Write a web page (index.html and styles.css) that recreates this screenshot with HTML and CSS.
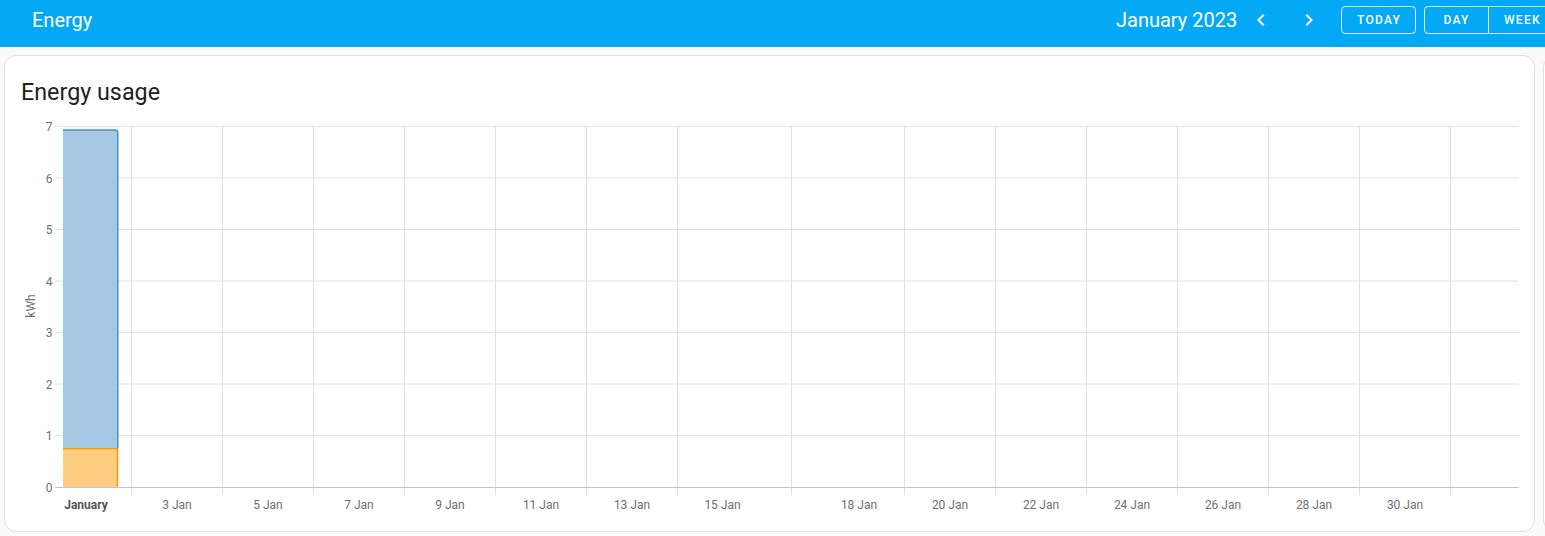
FILE: index.html
```html
<!DOCTYPE html>
<html lang="en">
<head>
    <meta charset="UTF-8">
    <meta name="viewport" content="width=device-width, initial-scale=1.0">
    <title>Energy</title>
    <link rel="stylesheet" href="styles.css">
</head>
<body>
    <div class="header">
        <div class="title">Energy</div>
        <div class="nav">
            <span class="period">January 2023</span>
            <button class="icon-btn" aria-label="Previous">
                <svg viewBox="0 0 24 24" width="24" height="24"><path d="M15.41,16.58L10.83,12L15.41,7.41L14,6L8,12L14,18L15.41,16.58Z" fill="#fff"/></svg>
            </button>
            <button class="icon-btn" aria-label="Next">
                <svg viewBox="0 0 24 24" width="24" height="24"><path d="M8.59,16.58L13.17,12L8.59,7.41L10,6L16,12L10,18L8.59,16.58Z" fill="#fff"/></svg>
            </button>
            <button class="btn today">Today</button>
            <div class="btn-group">
                <button class="btn">Day</button>
                <button class="btn">Week</button>
            </div>
        </div>
    </div>
    <div class="cards">
        <div class="card">
            <h1>Energy usage</h1>
            <svg class="chart" width="1529" height="423" viewBox="0 0 1529 423">
                <g stroke="#e0e0e0" stroke-width="1">
                    <line x1="50" x2="1514" y1="18.5" y2="18.5"/>
                    <line x1="50" x2="1514" y1="70" y2="70"/>
                    <line x1="50" x2="1514" y1="121.5" y2="121.5"/>
                    <line x1="50" x2="1514" y1="173" y2="173"/>
                    <line x1="50" x2="1514" y1="224.5" y2="224.5"/>
                    <line x1="50" x2="1514" y1="276" y2="276"/>
                    <line x1="50" x2="1514" y1="327.5" y2="327.5"/>
                </g>
                <g stroke="#e0e0e0" stroke-width="1">
                    <line x1="126.5" x2="126.5" y1="18" y2="387"/>
                    <line x1="217.5" x2="217.5" y1="18" y2="387"/>
                    <line x1="308.5" x2="308.5" y1="18" y2="387"/>
                    <line x1="399.5" x2="399.5" y1="18" y2="387"/>
                    <line x1="490.5" x2="490.5" y1="18" y2="387"/>
                    <line x1="581.5" x2="581.5" y1="18" y2="387"/>
                    <line x1="672.5" x2="672.5" y1="18" y2="387"/>
                    <line x1="786.5" x2="786.5" y1="18" y2="387"/>
                    <line x1="899.5" x2="899.5" y1="18" y2="387"/>
                    <line x1="990.5" x2="990.5" y1="18" y2="387"/>
                    <line x1="1081.5" x2="1081.5" y1="18" y2="387"/>
                    <line x1="1172.5" x2="1172.5" y1="18" y2="387"/>
                    <line x1="1263.5" x2="1263.5" y1="18" y2="387"/>
                    <line x1="1354.5" x2="1354.5" y1="18" y2="387"/>
                    <line x1="1445.5" x2="1445.5" y1="18" y2="387"/>
                </g>
                <line x1="50" x2="1514" y1="379.5" y2="379.5" stroke="#c4c4c4" stroke-width="1"/>

                <!-- stacked bar: solar + grid -->
                <rect x="58" y="340" width="55" height="39" fill="#ffcc80"/>
                <path d="M58 340.5 H112.5 V379" fill="none" stroke="#ff9800" stroke-width="1.5"/>
                <path d="M58 340 V22 H110 Q113 22 113 25 V340 Z" fill="#a5c8e2"/>
                <path d="M58 22 H110 Q112.8 22 112.8 25 V340" fill="none" stroke="#488fc2" stroke-width="1.5"/>

                <g class="ylabels" text-anchor="end">
                    <text x="47.5" y="23">7</text>
                    <text x="47.5" y="74.5">6</text>
                    <text x="47.5" y="126">5</text>
                    <text x="47.5" y="177.5">4</text>
                    <text x="47.5" y="229">3</text>
                    <text x="47.5" y="280.5">2</text>
                    <text x="47.5" y="332">1</text>
                    <text x="47.5" y="383.5">0</text>
                </g>
                <text class="unit" transform="translate(29.5,198) rotate(-90)" text-anchor="middle">kWh</text>

                <g class="xlabels" text-anchor="middle">
                    <text x="81" y="401" class="major">January</text>
                    <text x="172" y="401">3 Jan</text>
                    <text x="263" y="401">5 Jan</text>
                    <text x="354" y="401">7 Jan</text>
                    <text x="445" y="401">9 Jan</text>
                    <text x="536" y="401">11 Jan</text>
                    <text x="627" y="401">13 Jan</text>
                    <text x="717.5" y="401">15 Jan</text>
                    <text x="854" y="401">18 Jan</text>
                    <text x="945" y="401">20 Jan</text>
                    <text x="1036" y="401">22 Jan</text>
                    <text x="1127" y="401">24 Jan</text>
                    <text x="1218" y="401">26 Jan</text>
                    <text x="1309" y="401">28 Jan</text>
                    <text x="1400" y="401">30 Jan</text>
                </g>
            </svg>
        </div>
        <div class="card side"></div>
    </div>
</body>
</html>
```

FILE: styles.css
```css
body {
    margin: 0;
    font-family: Roboto, "Noto Sans", sans-serif;
    background-color: #fafafa;
    overflow: hidden;
}
.header {
    height: 47px;
    background-color: #03a9f4;
    color: #fff;
    display: flex;
    align-items: center;
    padding-left: 32px;
    overflow: hidden;
}
.title {
    flex: 1;
    font-size: 20px;
    line-height: 20px;
    margin-top: -8px;
    white-space: nowrap;
}
.nav {
    flex: none;
    display: flex;
    align-items: center;
    margin-right: -9px;
    margin-top: -8px;
}
.period {
    font-size: 20px;
    width: 121px;
    white-space: nowrap;
}
.icon-btn {
    width: 48px;
    height: 28px;
    padding: 0;
    border: none;
    background: none;
    display: flex;
    align-items: center;
    justify-content: center;
    cursor: pointer;
}
.btn {
    height: 28px;
    padding: 0 15px;
    border: 1px solid rgba(255, 255, 255, 0.85);
    border-radius: 4px;
    background: none;
    color: #fff;
    font-family: Roboto, sans-serif;
    font-size: 12px;
    font-weight: 500;
    letter-spacing: 1.3px;
    text-transform: uppercase;
    cursor: pointer;
}
.today {
    width: 75px;
    margin-left: 8px;
}
.btn-group {
    display: flex;
    margin-left: 8px;
}
.btn-group .btn {
    width: 65px;
    border-radius: 0;
    border-left: none;
}
.btn-group .btn:first-child {
    border-left: 1px solid rgba(255, 255, 255, 0.85);
    border-radius: 4px 0 0 4px;
}
.btn-group .btn:last-child {
    border-radius: 0 4px 4px 0;
}
.cards {
    display: flex;
    gap: 8px;
    padding: 8px 4px;
}
.card {
    flex: none;
    width: 1529px;
    height: 475px;
    background-color: #fff;
    border: 1px solid #e0e0e0;
    border-radius: 12px;
    overflow: hidden;
}
.card.side {
    width: 400px;
}
.card h1 {
    margin: 0;
    padding: 20px 16px 0;
    font-size: 23.3px;
    line-height: 32px;
    font-weight: 400;
    color: #212121;
}
.chart {
    display: block;
    font-family: Roboto, sans-serif;
    font-size: 12px;
}
.chart text {
    fill: #6f6f6f;
}
.chart .major {
    font-weight: 700;
    fill: #555;
}
```
